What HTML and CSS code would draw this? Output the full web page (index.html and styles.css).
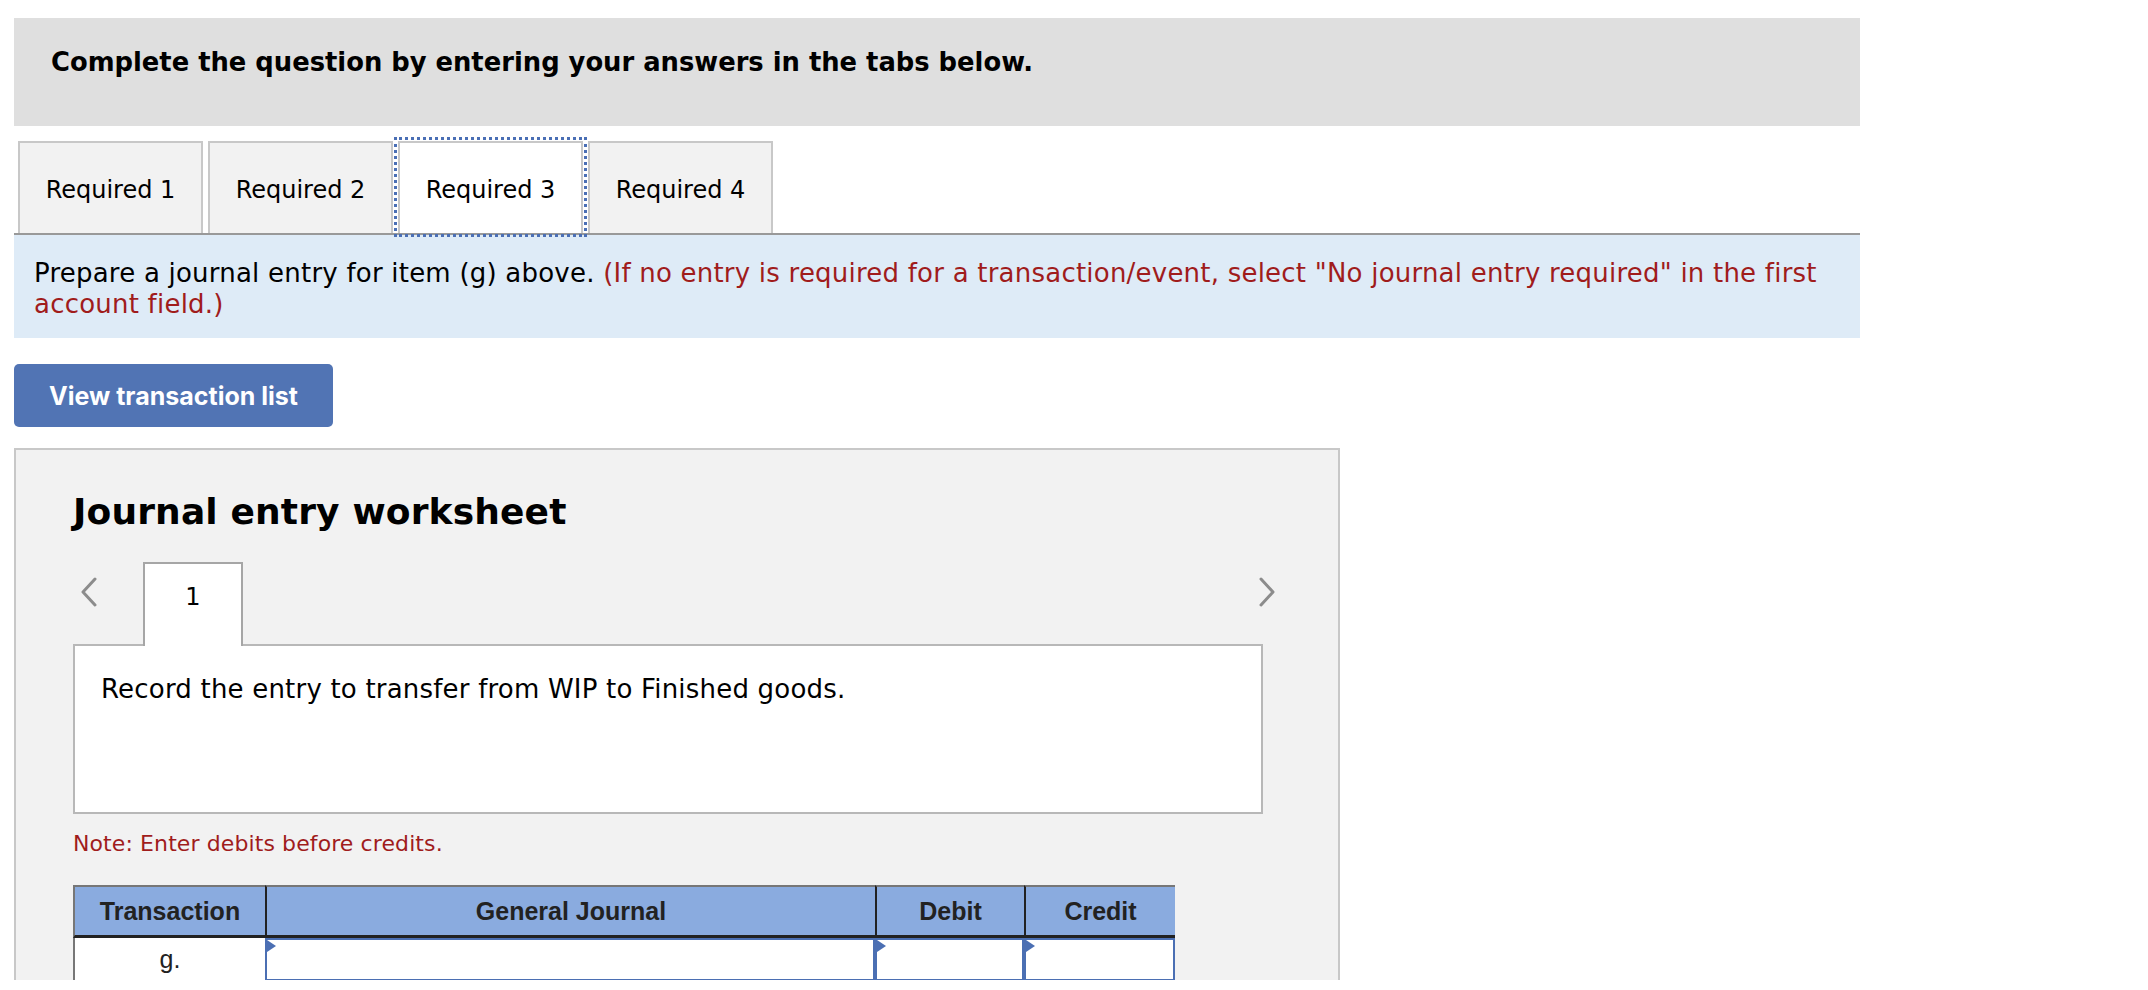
FILE: index.html
```html
<!DOCTYPE html>
<html lang="en">
<head>
<meta charset="utf-8">
<title>Journal entry worksheet</title>
<link rel="stylesheet" href="styles.css">
</head>
<body>
<div class="page">
  <div class="banner">Complete the question by entering your answers in the tabs below.</div>
  <div class="tabs">
    <div class="tab">Required 1</div>
    <div class="tab">Required 2</div>
    <div class="tab active">Required 3</div>
    <div class="tab">Required 4</div>
  </div>
  <div class="info">Prepare a journal entry for item (g) above. <span class="red">(If no entry is required for a transaction/event, select "No journal entry required" in the first account field.)</span></div>
  <button class="btn" type="button">View transaction list</button>
  <div class="panel">
    <h2 class="ws-title">Journal entry worksheet</h2>
    <div class="nav">
      <svg class="arrow left" viewBox="0 0 18 30" aria-hidden="true"><polyline points="15,2 3,15 15,28"/></svg>
      <div class="num-tab">1</div>
      <svg class="arrow right" viewBox="0 0 18 30" aria-hidden="true"><polyline points="3,2 15,15 3,28"/></svg>
    </div>
    <div class="entry-box">Record the entry to transfer from WIP to Finished goods.</div>
    <p class="note">Note: Enter debits before credits.</p>
    <div class="journal">
      <div class="jh first">Transaction</div>
      <div class="jh">General Journal</div>
      <div class="jh">Debit</div>
      <div class="jh">Credit</div>
      <div class="jc txn">g.</div>
      <div class="jc input"></div>
      <div class="jc input"></div>
      <div class="jc input"></div>
    </div>
  </div>
</div>
</body>
</html>
```
FILE: styles.css
```css
html, body {
  margin: 0;
  background: #fff;
}
body {
  font-family: "DejaVu Sans", Verdana, sans-serif;
  color: #000;
}
.page {
  padding: 18px 0 0 14px;
  height: 980px;
  box-sizing: border-box;
  overflow: hidden;
}
.banner {
  width: 1846px;
  height: 108px;
  box-sizing: border-box;
  background: #dfdfdf;
  padding: 29px 0 0 37px;
  font-weight: bold;
  font-size: 25.8px;
  line-height: 31px;
}
.tabs {
  width: 1846px;
  margin-top: 15px;
  display: flex;
  gap: 5px;
  padding-left: 4px;
  box-sizing: border-box;
  border-bottom: 2px solid #999;
}
.tab {
  width: 185px;
  height: 92px;
  box-sizing: border-box;
  border: 2px solid #c8c8c8;
  border-bottom: none;
  background: #f2f2f2;
  font-size: 24px;
  line-height: 29px;
  text-align: center;
  padding-top: 33px;
}
.tab.active {
  background: #fff;
  outline: 3px dotted #4a6fb5;
  outline-offset: 1px;
}
.info {
  width: 1846px;
  box-sizing: border-box;
  background: #deebf7;
  padding: 23px 20px 18px;
  font-size: 26px;
  line-height: 31px;
  letter-spacing: 0.22px;
}
.red {
  color: #a01c1c;
}
.btn {
  display: block;
  margin-top: 26px;
  width: 319px;
  height: 63px;
  border: none;
  border-radius: 5px;
  background: #5174b4;
  color: #fff;
  font-family: Inter, "Liberation Sans", sans-serif;
  font-weight: 700;
  font-size: 25px;
  padding: 0;
}
.panel {
  margin-top: 21px;
  width: 1326px;
  min-height: 600px;
  box-sizing: border-box;
  border: 2px solid #c8c8c8;
  background: #f2f2f2;
  padding: 40px 0 0 57px;
}
.ws-title {
  margin: 0;
  font-size: 36px;
  line-height: 43px;
  font-weight: bold;
  letter-spacing: 0.15px;
}
.nav {
  margin-top: 29px;
  width: 1203px;
  display: flex;
  align-items: flex-start;
}
.arrow {
  flex: none;
  width: 18px;
  height: 30px;
  margin-top: 15px;
  fill: none;
  stroke: #8c8c8c;
  stroke-width: 3;
  stroke-linecap: round;
  stroke-linejoin: round;
}
.arrow.left {
  margin-left: 7px;
}
.arrow.right {
  margin-left: auto;
}
.num-tab {
  position: relative;
  z-index: 1;
  margin-left: 45px;
  margin-bottom: -2px;
  width: 100px;
  height: 84px;
  box-sizing: border-box;
  border: 2px solid #a6a6a6;
  border-bottom: none;
  background: #fff;
  font-size: 24px;
  line-height: 29px;
  text-align: center;
  padding-top: 19px;
}
.entry-box {
  width: 1190px;
  height: 170px;
  box-sizing: border-box;
  border: 2px solid #b8b8b8;
  background: #fff;
  padding: 28px 26px;
  font-size: 26px;
  line-height: 31px;
  letter-spacing: 0.2px;
}
.note {
  margin: 17px 0 0;
  font-size: 22px;
  line-height: 26px;
  letter-spacing: 0.1px;
  color: #a01c1c;
}
.journal {
  margin-top: 28px;
  display: grid;
  grid-template-columns: 192px 610px 149px 151px;
  font-family: "Liberation Sans", Arial, sans-serif;
}
.jh {
  height: 53px;
  box-sizing: border-box;
  background: #8aabdf;
  border-top: 2px solid #777;
  border-bottom: 3px solid #222;
  display: flex;
  align-items: center;
  justify-content: center;
  font-weight: bold;
  font-size: 25px;
  color: #222;
}
.jh + .jh {
  border-left: 2px solid #222;
}
.jh.first {
  border-left: 2px solid #777;
}
.jc {
  height: 43px;
  box-sizing: border-box;
  background: #fff;
}
.jc.txn {
  border-left: 2px solid #777;
  display: flex;
  align-items: center;
  justify-content: center;
  font-size: 25px;
  color: #222;
}
.jc.input {
  position: relative;
  border: 2px solid #4b6fb3;
}
.jc.input::before {
  content: "";
  position: absolute;
  left: 0;
  top: 0;
  border-left: 9px solid #4b6fb3;
  border-top: 6px solid transparent;
  border-bottom: 6px solid transparent;
}
```
